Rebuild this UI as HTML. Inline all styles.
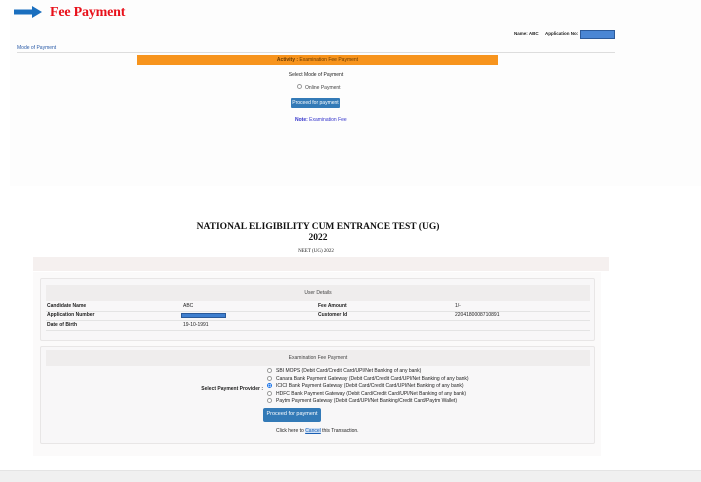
<!DOCTYPE html>
<html><head><meta charset="utf-8"><style>
*{margin:0;padding:0;box-sizing:border-box}
body{width:701px;height:482px;background:#fff;position:relative;overflow:hidden;font-family:"Liberation Sans",sans-serif;color:#222}
.a{position:absolute;white-space:nowrap}
.s{font-size:5px}
.b{font-weight:bold}
.r{position:absolute;width:5px;height:5px;border:1px solid #999;border-radius:50%;background:#fff}
</style></head><body>
<div class="a" style="left:10px;top:0;width:691px;height:186px;background:#fdfdfd"></div>
<svg class="a" style="left:14px;top:6px" width="28" height="12" viewBox="0 0 28 12"><path d="M0 3.5H18V0L28 6L18 12V8.5H0Z" fill="#1a6fbf"/></svg>
<div class="a b" style="left:50px;top:5px;font-family:'Liberation Serif',serif;font-size:14px;letter-spacing:-0.2px;color:#e8101a">Fee Payment</div>
<div class="a b" style="left:514px;top:31px;font-size:4.5px">Name: ABC</div>
<div class="a b" style="left:545px;top:31px;font-size:4.5px">Application No:</div>
<div class="a" style="left:580px;top:30px;width:35px;height:9px;background:#4a86d4;border:1px solid #2c5a9a"></div>
<div class="a s" style="left:17px;top:45px;color:#2a5ba8">Mode of Payment</div>
<div class="a" style="left:17px;top:52px;width:598px;height:1px;background:#ddd"></div>
<div class="a" style="left:137px;top:55px;width:361px;height:10px;background:#f7941d"></div>
<div class="a s" style="left:137px;top:57px;width:361px;text-align:center;color:#6a3a00"><b>Activity :</b> Examination Fee Payment</div>
<div class="a s" style="left:260px;top:72px;width:112px;text-align:center">Select Mode of Payment</div>
<div class="r" style="left:297px;top:84px"></div>
<div class="a s" style="left:305px;top:85px;color:#444">Online Payment</div>
<div class="a" style="left:291px;top:98px;width:49px;height:10px;background:#337ab7;border-radius:1px"></div>
<div class="a s" style="left:291px;top:100px;width:49px;text-align:center;color:#fff">Proceed for payment</div>
<div class="a s" style="left:295px;top:117px;color:#33c"><b>Note:</b> Examination Fee</div>

<div class="a b" style="left:150px;top:222px;width:336px;text-align:center;font-family:'Liberation Serif',serif;font-size:9.5px;line-height:11px;color:#111">NATIONAL ELIGIBILITY CUM ENTRANCE TEST (UG)<br>2022</div>
<div class="a" style="left:150px;top:249px;width:332px;text-align:center;font-family:'Liberation Serif',serif;font-size:5px">NEET (UG) 2022</div>
<div class="a" style="left:33px;top:257px;width:576px;height:14px;background:#f5f0ef"></div>
<div class="a" style="left:33px;top:272px;width:568px;height:184px;background:#fbfafa"></div>

<div class="a" style="left:40px;top:278px;width:555px;height:63px;background:#f8f7f8;border:1px solid #e8e6e6;border-radius:2px"></div>
<div class="a" style="left:46px;top:285px;width:544px;height:16px;background:#efeded"></div>
<div class="a s" style="left:46px;top:290px;width:544px;text-align:center;color:#444">User Details</div>
<div class="a" style="left:46px;top:311px;width:544px;height:1px;background:#e4e4e4"></div>
<div class="a" style="left:46px;top:320px;width:544px;height:1px;background:#e4e4e4"></div>
<div class="a" style="left:46px;top:330px;width:544px;height:1px;background:#e4e4e4"></div>
<div class="a s b" style="left:47px;top:303px">Candidate Name</div>
<div class="a s" style="left:183px;top:303px">ABC</div>
<div class="a s b" style="left:318px;top:303px">Fee Amount</div>
<div class="a s" style="left:455px;top:303px">1/-</div>
<div class="a s b" style="left:47px;top:312px">Application Number</div>
<div class="a" style="left:181px;top:313px;width:45px;height:5px;background:#3f7fcf;border:1px solid #2a5a9a"></div>
<div class="a s b" style="left:318px;top:312px">Customer Id</div>
<div class="a s" style="left:455px;top:312px">2204180008710891</div>
<div class="a s b" style="left:47px;top:322px">Date of Birth</div>
<div class="a s" style="left:183px;top:322px">19-10-1991</div>

<div class="a" style="left:40px;top:346px;width:555px;height:98px;background:#f8f7f8;border:1px solid #e8e6e6;border-radius:2px"></div>
<div class="a" style="left:46px;top:350px;width:544px;height:16px;background:#efeded"></div>
<div class="a s" style="left:46px;top:355px;width:544px;text-align:center;color:#444">Examination Fee Payment</div>
<div class="a s b" style="left:150px;top:386px;width:113px;text-align:right">Select Payment Provider :</div>
<div class="r" style="left:267px;top:368px"></div><div class="a s" style="left:276px;top:368px">SBI MOPS (Debit Card/Credit Card/UPI/Net Banking of any bank)</div>
<div class="r" style="left:267px;top:376px"></div><div class="a s" style="left:276px;top:376px">Canara Bank Payment Gateway (Debit Card/Credit Card/UPI/Net Banking of any bank)</div>
<div class="r" style="left:267px;top:383px;border:1.5px solid #1a73e8;background:radial-gradient(#1a73e8 40%,#fff 50%)"></div><div class="a s" style="left:276px;top:383px">ICICI Bank Payment Gateway (Debit Card/Credit Card/UPI/Net Banking of any bank)</div>
<div class="r" style="left:267px;top:391px"></div><div class="a s" style="left:276px;top:391px">HDFC Bank Payment Gateway (Debit Card/Credit Card/UPI/Net Banking of any bank)</div>
<div class="r" style="left:267px;top:398px"></div><div class="a s" style="left:276px;top:398px">Paytm Payment Gateway (Debit Card/UPI/Net Banking/Credit Card/Paytm Wallet)</div>
<div class="a" style="left:263px;top:408px;width:58px;height:14px;background:#337ab7;border-radius:2px"></div>
<div class="a" style="left:263px;top:411px;width:58px;text-align:center;color:#fff;font-size:5.5px">Proceed for payment</div>
<div class="a s" style="left:276px;top:428px">Click here to <span style="color:#1a5fb4;text-decoration:underline;background:#cfe0f5">Cancel</span> this Transaction.</div>

<div class="a" style="left:0;top:470px;width:701px;height:12px;background:#f0f0f0;border-top:1px solid #e4e4e4"></div>
</body></html>
